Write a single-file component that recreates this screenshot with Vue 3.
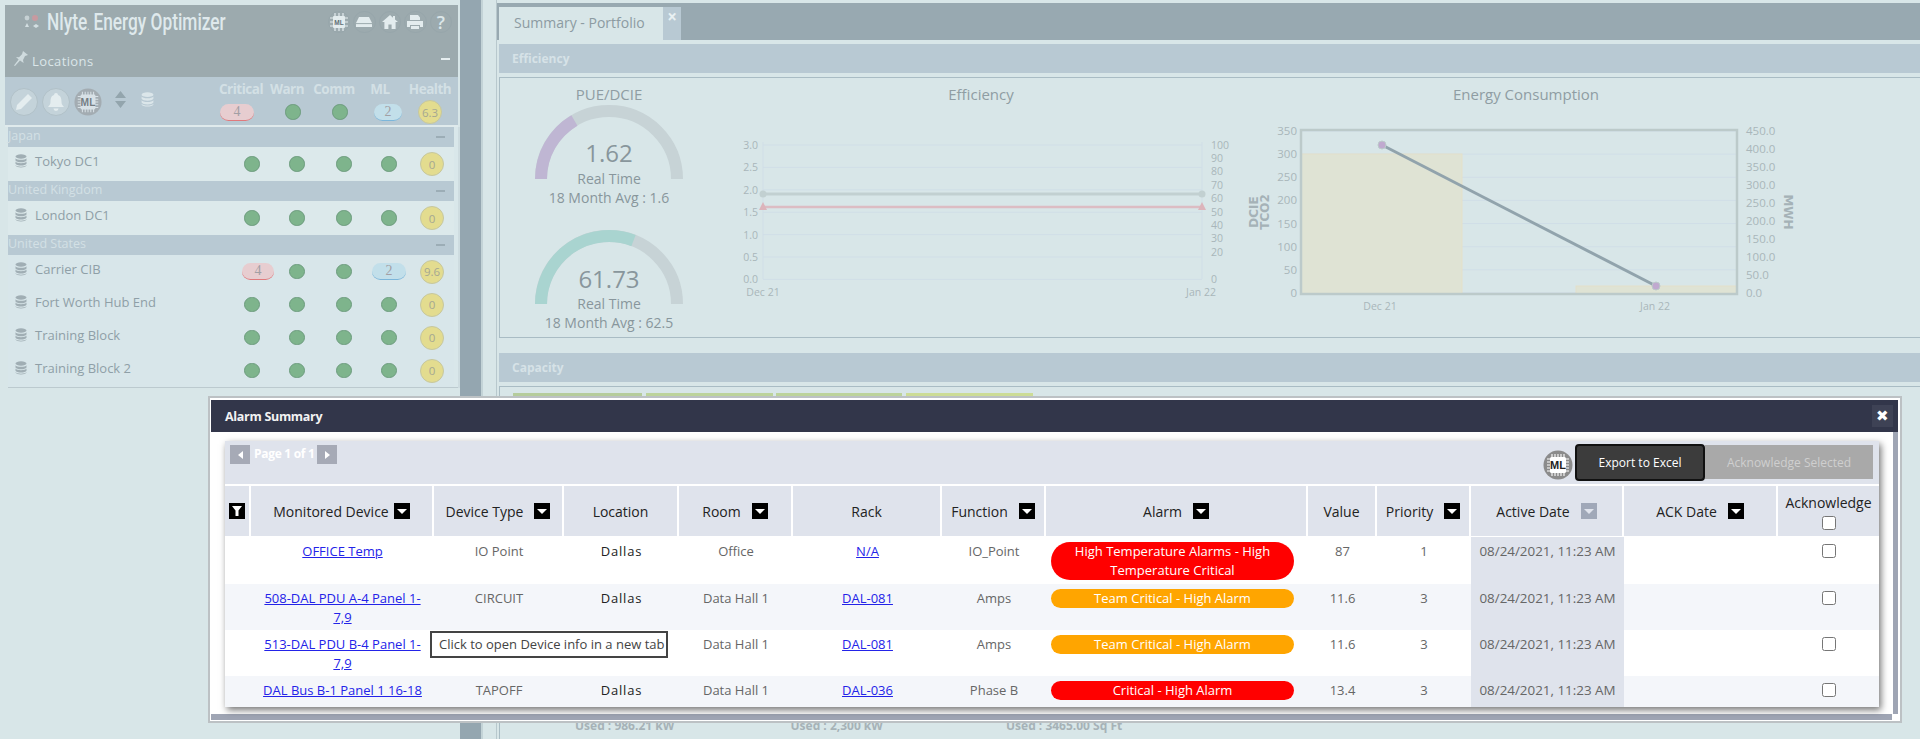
<template>
  <div class="page">
    <svg class="sprites" width="0" height="0">
      <symbol id="db" viewBox="0 0 12 14">
        <ellipse cx="6" cy="2.5" rx="5.5" ry="2.2" fill="currentColor" />
        <path d="M.5 4.2c1 2.2 10 2.2 11 0v2.2c-1 2.4-10 2.4-11 0zM.5 7.6c1 2.2 10 2.2 11 0v2.2c-1 2.4-10 2.4-11 0zM.5 11c1 2.2 10 2.2 11 0v.6c-1 2.6-10 2.6-11 0z" fill="currentColor" />
      </symbol>
      <symbol id="chip" viewBox="0 0 30 30">
        <circle cx="15" cy="15" r="14.5" fill="#8b8b8b" />
        <path d="M9 4v22M12 4v22M15 4v22M18 4v22M21 4v22M4 9h22M4 12h22M4 15h22M4 18h22M4 21h22" stroke="#fff" stroke-width="1.1" />
        <rect x="7" y="7" width="16" height="16" rx="1.5" fill="#fff" />
        <text x="15" y="19" text-anchor="middle" class="chip-text">ML</text>
      </symbol>
    </svg>

    <aside class="left">
      <section class="panel">
        <header class="panel-top">
          <div class="brand">
            <svg class="logo" width="20" height="14" viewBox="0 0 20 14">
              <circle cx="5" cy="3" r="2.4" fill="#c6d1d4" />
              <circle cx="13" cy="3" r="3" fill="#c79aa0" />
              <path d="M5 8l2 4H3zM14 9l3 2-3 2-3-2z" fill="#d3dfe2" />
            </svg>
            <span class="brand-name">Nlyte<small>.</small> Energy Optimizer</span>
            <div class="top-icons">
              <span class="round">
                <svg width="20" height="20" viewBox="0 0 20 20"><path d="M6 1v18M10 1v18M14 1v18M1 6h18M1 10h18M1 14h18" stroke="#e3ecee" stroke-width="1.2" /><rect x="4" y="4" width="12" height="12" rx="1" fill="#e3ecee" /><text x="10" y="12.6" text-anchor="middle" class="mini-ml">ML</text></svg>
              </span>
              <span class="round">
                <svg width="18" height="18" viewBox="0 0 18 18"><path d="M4 4h10l3 6v4H1v-4z" fill="#e3ecee" /><path d="M1 10.6h16" stroke="#9caaae" /></svg>
              </span>
              <span class="round">
                <svg width="18" height="18" viewBox="0 0 18 18"><path d="M9 2L1 9h2.4v7h4v-4.6h3.2V16h4V9H17l-3-2.6V3h-2v1.7z" fill="#e3ecee" /></svg>
              </span>
              <span class="round">
                <svg width="18" height="18" viewBox="0 0 18 18"><path d="M4 2h8l2 2.5V7H4zM1 8h16v6h-3v-2H4v2H1zM5 13h8v3H5z" fill="#e3ecee" /></svg>
              </span>
              <span class="round question">?</span>
            </div>
          </div>
          <div class="locations">
            <svg width="14" height="16" viewBox="0 0 14 16"><path d="M9 0l5 4-3 1-2 4 .6 3L6 9.600 1 15l-1-.6 4.600-6L2 6l3 .2 3-3z" fill="#cfdbde" /></svg>
            <span>Locations</span>
            <b class="minus"></b>
          </div>
        </header>

        <div class="sub-head">
          <div class="tools">
            <span class="tool">
              <svg width="20" height="20" viewBox="0 0 20 20"><path d="M14 2l4 4L7 17l-5 1 1-5z" fill="#e4edef" /></svg>
            </span>
            <span class="tool">
              <svg width="18" height="20" viewBox="0 0 18 20"><path d="M9 1a2 2 0 0 1 2 2c3 1 3.500 4 3.500 7 0 2 1 3.500 2.500 5H1c1.500-1.500 2.500-3 2.500-5 0-3 .5-6 3.500-7a2 2 0 0 1 2-2zM6.500 16.500h5a2.500 2.500 0 0 1-5 0z" fill="#e4edef" /></svg>
            </span>
            <svg class="tool-chip" width="28" height="28"><use href="#chip" /></svg>
            <svg class="sort" width="11" height="17" viewBox="0 0 11 17"><path d="M5.500 0L11 7H0zM5.500 17L0 10h11z" fill="#93a5ad" /></svg>
            <svg class="tool-db" width="13" height="15"><use href="#db" /></svg>
          </div>
          <div class="status-cols">
            <div v-for="c in statusCols" :key="c" class="status-label">{{ c }}</div>
            <div><span class="pill red head-critical">4</span></div>
            <div><i class="dot head-dot"></i></div>
            <div><i class="dot head-dot"></i></div>
            <div><span class="pill blue head-ml">2</span></div>
            <div><span class="health">6.3</span></div>
          </div>
        </div>

        <div class="tree">
          <template v-for="g in groups" :key="g.name">
            <div class="group-head">
              <span>{{ g.name }}</span>
              <b class="minus dark"></b>
            </div>
            <div v-for="row in g.rows" :key="row.name" class="loc-row" :class="{ tall: g.rows.length === 1 }">
              <div class="loc-name">
                <svg width="12" height="14"><use href="#db" /></svg>
                <span>{{ row.name }}</span>
              </div>
              <div class="cell">
                <span v-if="row.critical" class="pill red shifted">{{ row.critical }}</span>
                <i v-else class="dot"></i>
              </div>
              <div class="cell"><i class="dot"></i></div>
              <div class="cell"><i class="dot"></i></div>
              <div class="cell">
                <span v-if="row.ml" class="pill blue">{{ row.ml }}</span>
                <i v-else class="dot"></i>
              </div>
              <div class="cell"><span class="health">{{ row.health }}</span></div>
            </div>
          </template>
        </div>
      </section>
    </aside>

    <div class="divider"></div>

    <main class="main">
      <div class="tabs">
        <div class="tab">Summary - Portfolio</div>
        <div class="tab-close">×</div>
      </div>

      <h2 class="section-head">Efficiency</h2>
      <div class="efficiency">
        <svg class="chart" width="220" height="259" viewBox="500 78 220 259">
          <text x="609" y="100" text-anchor="middle" class="chart-title">PUE/DCIE</text>

          <path :d="arc(609, 179, 68, 0, 1)" class="gauge-track" />
          <path :d="arc(609, 179, 68, 0, 0.33)" class="gauge-purple" />
          <text x="609" y="162" text-anchor="middle" class="gauge-value">1.62</text>
          <text x="609" y="184" text-anchor="middle" class="gauge-sub">Real Time</text>
          <text x="609" y="203" text-anchor="middle" class="gauge-sub">18 Month Avg :  1.6</text>

          <path :d="arc(609, 304, 68, 0, 1)" class="gauge-track" />
          <path :d="arc(609, 304, 68, 0, 0.6173)" class="gauge-teal" />
          <text x="609" y="288" text-anchor="middle" class="gauge-value">61.73</text>
          <text x="609" y="309" text-anchor="middle" class="gauge-sub">Real Time</text>
          <text x="609" y="328" text-anchor="middle" class="gauge-sub">18 Month Avg :  62.5</text>
        </svg>

        <svg class="chart" width="550" height="259" viewBox="720 78 550 259">
          <text x="981" y="100" text-anchor="middle" class="chart-title">Efficiency</text>
          <line v-for="t in pueTicks" :key="t.label" x1="763" x2="1202" :y1="t.y" :y2="t.y" class="grid" />
          <line x1="763" x2="763" y1="142" y2="279" class="grid" />
          <line x1="1202" x2="1202" y1="142" y2="279" class="grid" />
          <text v-for="t in pueTicks" :key="'l' + t.label" x="758" :y="t.y + 4" text-anchor="end" class="tick">{{ t.label }}</text>
          <text v-for="t in dcieTicks" :key="t.label" x="1211" :y="t.y + 4" class="tick">{{ t.label }}</text>
          <text transform="translate(716 211) rotate(-90)" text-anchor="middle" class="axis-name">PUE</text>
          <text transform="translate(1258 212) rotate(-90)" text-anchor="middle" class="axis-name serifish">DCIE</text>
          <text transform="translate(1269 212) rotate(-90)" text-anchor="middle" class="axis-name serifish">TCO2</text>
          <line x1="763" x2="1202" y1="194" y2="194" stroke="#c2d0d1" stroke-width="3" />
          <line x1="763" x2="1202" y1="207" y2="207" stroke="#dcbcc3" stroke-width="2.500" />
          <circle cx="763" cy="194" r="3.500" fill="#c2d0d1" />
          <circle cx="1202" cy="194" r="3.500" fill="#c2d0d1" />
          <path d="M763 202l4 8h-8zM1202 202l4 8h-8z" fill="#dcb4bb" />
          <text x="763" y="296" text-anchor="middle" class="tick">Dec 21</text>
          <text x="1201" y="296" text-anchor="middle" class="tick">Jan 22</text>
        </svg>

        <svg class="chart" width="550" height="259" viewBox="1270 78 550 259">
          <text x="1526" y="100" text-anchor="middle" class="chart-title">Energy Consumption</text>
          <line v-for="t in tco2Ticks" :key="t.label" x1="1301" x2="1737" :y1="t.y" :y2="t.y" class="grid" />
          <rect x="1301" y="154" width="161" height="140" fill="#dfe3d4" stroke="#e4e0c9" />
          <rect x="1576" y="286" width="161" height="8" fill="#dfe3d4" stroke="#e4e0c9" />
          <rect x="1301" y="130" width="436" height="164" fill="none" stroke="#bccaca" stroke-width="2.500" />
          <line x1="1382" y1="145" x2="1656" y2="286" stroke="#91a3ac" stroke-width="3" />
          <circle cx="1382" cy="145" r="4" fill="#c0a9cf" stroke="#bccaca" />
          <circle cx="1656" cy="286" r="4" fill="#c0a9cf" stroke="#bccaca" />
          <text v-for="t in tco2Ticks" :key="'l' + t.label" x="1297" :y="t.y + 4" text-anchor="end" class="tick big">{{ t.label }}</text>
          <text v-for="t in mwhTicks" :key="t.label" x="1746" :y="t.y + 4" class="tick big">{{ t.label }}</text>
          <text transform="translate(1784 212) rotate(90)" text-anchor="middle" class="axis-name serifish">MWH</text>
          <text x="1380" y="310" text-anchor="middle" class="tick">Dec 21</text>
          <text x="1655" y="310" text-anchor="middle" class="tick">Jan 22</text>
        </svg>
      </div>

      <h2 class="section-head capacity-head">Capacity</h2>
      <div class="capacity">
        <div class="bars">
          <i v-for="b in capacityBars" :key="b.w + b.color" :style="{ width: b.w + 'px', background: b.color }"></i>
        </div>
        <div class="used">
          <span v-for="u in usedLabels" :key="u">{{ u }}</span>
        </div>
      </div>
    </main>

    <div class="modal">
      <div class="modal-title">
        <span>Alarm Summary</span>
        <button class="modal-close">✖</button>
      </div>
      <div class="modal-body">
        <div class="modal-content">
          <div class="table-wrap">
            <div class="toolbar">
              <button class="page-btn"><i class="tri left-tri"></i></button>
              <span class="page-label">Page 1 of 1</span>
              <button class="page-btn"><i class="tri right-tri"></i></button>
              <svg class="ml-icon" width="30" height="30"><use href="#chip" /></svg>
              <button class="btn-export">Export to Excel</button>
              <button class="btn-ack">Acknowledge Selected</button>
            </div>
            <table>
              <colgroup>
                <col v-for="w in colWidths" :key="w.id" :style="{ width: w.px + 'px' }" />
              </colgroup>
              <thead>
                <tr>
                  <th>
                    <span class="filter">
                      <svg width="12" height="12" viewBox="0 0 12 12"><path d="M1 1h10L7.500 5.500V11h-3V5.500z" fill="#fff" /></svg>
                    </span>
                  </th>
                  <th>Monitored Device<span class="filter arrow near"></span></th>
                  <th>Device Type<span class="filter arrow"></span></th>
                  <th>Location</th>
                  <th>Room<span class="filter arrow"></span></th>
                  <th>Rack</th>
                  <th>Function<span class="filter arrow"></span></th>
                  <th>Alarm<span class="filter arrow"></span></th>
                  <th>Value</th>
                  <th>Priority<span class="filter arrow"></span></th>
                  <th>Active Date<span class="filter arrow active"></span></th>
                  <th>ACK Date<span class="filter arrow"></span></th>
                  <th class="ack-head">Acknowledge<input type="checkbox" /></th>
                </tr>
              </thead>
              <tbody>
                <tr v-for="a in alarms" :key="a.device" :style="{ height: a.h + 'px' }">
                  <td></td>
                  <td><a href="#">{{ a.device }}</a></td>
                  <td>{{ a.type }}</td>
                  <td class="place">Dallas</td>
                  <td>{{ a.room }}</td>
                  <td><a href="#">{{ a.rack }}</a></td>
                  <td>{{ a.fn }}</td>
                  <td class="alarm-cell"><div class="alarm" :class="a.level">{{ a.alarm }}</div></td>
                  <td>{{ a.value }}</td>
                  <td>{{ a.priority }}</td>
                  <td class="date">08/24/2021, 11:23 AM</td>
                  <td></td>
                  <td><input type="checkbox" /></td>
                </tr>
              </tbody>
            </table>
            <div class="tooltip">Click to open Device info in a new tab</div>
          </div>
        </div>
        <div class="vbar"></div>
      </div>
      <div class="hbar"></div>
    </div>
  </div>
</template>

<script setup>
const statusCols = ['Critical', 'Warn', 'Comm', 'ML', 'Health']

const groups = [
  { name: 'Japan', rows: [{ name: 'Tokyo DC1', health: '0' }] },
  { name: 'United Kingdom', rows: [{ name: 'London DC1', health: '0' }] },
  {
    name: 'United States',
    rows: [
      { name: 'Carrier CIB', critical: 4, ml: 2, health: '9.6' },
      { name: 'Fort Worth Hub End', health: '0' },
      { name: 'Training Block', health: '0' },
      { name: 'Training Block 2', health: '0' }
    ]
  }
]

const pueTicks = ['3.0', '2.5', '2.0', '1.5', '1.0', '0.5', '0.0'].map((label, i) => ({
  label,
  y: 145 + i * 22.4
}))
const dcieTicks = [
  ['100', 145], ['90', 158], ['80', 171], ['70', 185], ['60', 198],
  ['50', 212], ['40', 225], ['30', 238], ['20', 252], ['0', 279]
].map(([label, y]) => ({ label, y }))
const tco2Ticks = ['350', '300', '250', '200', '150', '100', '50', '0'].map((label, i) => ({
  label,
  y: 131 + i * 23.14
}))
const mwhTicks = ['450.0', '400.0', '350.0', '300.0', '250.0', '200.0', '150.0', '100.0', '50.0', '0.0'].map((label, i) => ({
  label,
  y: 131 + i * 18
}))

const capacityBars = [
  { w: 129, color: '#b5cc9c' },
  { w: 127, color: '#bcd39b' },
  { w: 126, color: '#bcd39b' },
  { w: 127, color: '#ccdc96' }
]
const usedLabels = ['Used : 986.21 kW', 'Used : 2,300 kW', 'Used : 3465.00 Sq Ft']

const colWidths = [26, 183, 130, 115, 114, 149, 104, 262, 69, 94, 153, 154, 101].map((px, id) => ({ id, px }))

const alarms = [
  { device: 'OFFICE Temp', type: 'IO Point', room: 'Office', rack: 'N/A', fn: 'IO_Point', alarm: 'High Temperature Alarms - High Temperature Critical', level: 'red', value: '87', priority: 1, h: 47 },
  { device: '508-DAL PDU A-4 Panel 1-7,9', type: 'CIRCUIT', room: 'Data Hall 1', rack: 'DAL-081', fn: 'Amps', alarm: 'Team Critical - High Alarm', level: 'orange', value: '11.6', priority: 3, h: 46 },
  { device: '513-DAL PDU B-4 Panel 1-7,9', type: '', room: 'Data Hall 1', rack: 'DAL-081', fn: 'Amps', alarm: 'Team Critical - High Alarm', level: 'orange', value: '11.6', priority: 3, h: 46 },
  { device: 'DAL Bus B-1 Panel 1 16-18', type: 'TAPOFF', room: 'Data Hall 1', rack: 'DAL-036', fn: 'Phase B', alarm: 'Critical - High Alarm', level: 'red', value: '13.4', priority: 3, h: 31 }
]

// half-circle gauge, from the left end (0) over the top to the right end (1)
const arc = (cx, cy, r, from, to) => {
  const point = (t) => {
    const a = Math.PI * (1 - t)
    return `${(cx + r * Math.cos(a)).toFixed(2)} ${(cy - r * Math.sin(a)).toFixed(2)}`
  }
  return `M${point(from)} A${r} ${r} 0 0 1 ${point(to)}`
}
</script>

<style>
html,
body {
  margin: 0;
  background: #d8e6e8;
}
</style>

<style scoped>
.page {
  position: relative;
  display: flex;
  width: 1920px;
  height: 739px;
  overflow: hidden;
  background: #d8e6e8;
  font-family: "Open Sans", "Liberation Sans", sans-serif;
}

.sprites {
  position: absolute;
}

.chip-text {
  font: 700 11px "Liberation Sans", sans-serif;
  fill: #222;
}

/* left panel */
.left {
  width: 459px;
  flex: none;
  padding: 5px 0 0 5px;
  box-sizing: border-box;
}

.panel {
  width: 453px;
}

.panel-top {
  height: 72px;
  background: #9caaae;
  color: #dbe6e9;
}

.brand {
  display: flex;
  align-items: center;
  height: 34px;
  padding-left: 17px;
}

.logo {
  flex: none;
}

.brand-name {
  flex: none;
  width: 173px;
  margin-left: 5px;
  font: 500 24px "Roboto", "Liberation Sans", sans-serif;
  white-space: nowrap;
  transform: scaleX(0.72);
  transform-origin: left center;
  color: #dfe9ec;
}

.brand-name small {
  font-size: 10px;
}

.top-icons {
  display: flex;
  gap: 3px;
  margin-left: auto;
  margin-right: 6px;
}

.round {
  display: flex;
  align-items: center;
  justify-content: center;
  width: 22.500px;
  height: 22.500px;
  border: 1px solid #97a6ab;
  border-radius: 50%;
  box-sizing: border-box;
}

.question {
  font-size: 18px;
  font-weight: 600;
}

.mini-ml {
  font: 700 6.500px "Liberation Sans", sans-serif;
  fill: #5f6f75;
}

.locations {
  display: flex;
  align-items: center;
  height: 36px;
  margin-top: 2px;
  padding: 0 8px 0 9px;
  font-size: 13px;
  letter-spacing: 0.4px;
}

.locations span {
  margin-left: 4px;
  padding-top: 4px;
}

.minus {
  display: block;
  width: 9px;
  height: 2px;
  margin-left: auto;
  background: #e6eef0;
}

.minus.dark {
  background: #9cadb6;
}

.sub-head {
  display: flex;
  height: 48px;
  background: #b8c9d3;
  border-bottom: 2px solid #dfeaec;
}

.tools {
  display: flex;
  align-items: center;
  width: 213px;
  flex: none;
  padding: 2px 0 0 5px;
  box-sizing: border-box;
}

.tool {
  display: flex;
  align-items: center;
  justify-content: center;
  width: 28px;
  height: 28px;
  margin-right: 4px;
  background: #c4d3da;
  border: 1px solid #b1c1c8;
  border-radius: 50%;
  box-sizing: border-box;
}

.tool-chip {
  opacity: 0.45;
}

.sort {
  margin: -6px 0 0 13px;
}

.tool-db {
  margin: -6px 0 0 15px;
  color: #dbe6ea;
}

.status-cols {
  display: grid;
  grid-template-columns: 46px 46px 48px 44px 56px;
  grid-template-rows: 22px 26px;
  flex: 1;
  text-align: center;
}

.status-label {
  padding-top: 2px;
  font-size: 13.500px;
  font-weight: 700;
  letter-spacing: -0.5px;
  color: #d3e0e5;
}

.status-cols > div {
  display: flex;
  align-items: center;
  justify-content: center;
}

.head-critical {
  margin-left: -8px;
}

.head-dot {
  margin-left: 12px;
}

.head-ml {
  margin-left: 16px;
}

.pill {
  display: inline-block;
  width: 34px;
  height: 17px;
  border-radius: 9px;
  box-sizing: border-box;
  font: 14px/16px "Liberation Serif", serif;
  text-align: center;
  color: #a29fa5;
}

.pill.red {
  background: #e7cdd0;
  border-bottom: 1px solid #df7a7d;
}

.pill.blue {
  background: #c2dfea;
  border-bottom: 1px solid #7cb6da;
}

.pill.shifted {
  margin-left: 12px;
}

.dot {
  display: block;
  width: 15.500px;
  height: 15.500px;
  border: 1px solid #6d9c7e;
  border-radius: 50%;
  background: #7eb48c;
  box-sizing: border-box;
}

.health {
  display: flex;
  align-items: center;
  justify-content: center;
  width: 24px;
  height: 24px;
  background: #e3dc8f;
  border: 1px solid #c6c79f;
  border-radius: 50%;
  box-sizing: border-box;
  font-size: 11.500px;
  color: #a5a792;
}

.tree {
  width: 446px;
  margin-left: 3px;
  padding-right: 4px;
  border-bottom: 1px solid #bccacf;
  background: #d9e7ea;
  box-shadow: 4px 0 0 #cedce0;
}

.group-head {
  display: flex;
  align-items: center;
  height: 20px;
  padding-right: 9px;
  background: #b8c9d3;
  font-size: 12.500px;
  color: #d3e0e5;
}

.group-head span {
  margin-top: -3px;
}

.loc-row {
  display: grid;
  grid-template-columns: 222px 44px 46px 48px 42px 44px;
  align-items: center;
  height: 33px;
  background: #d8e6ea;
}

.loc-row.tall {
  height: 34px;
  background: #dce9eb;
}

.loc-name {
  display: flex;
  align-items: center;
  gap: 8px;
  padding: 0 0 6px 7px;
  font-size: 13px;
  color: #8f9fa7;
}

.loc-name svg {
  color: #a0aeb4;
}

.cell {
  display: flex;
  align-items: center;
  justify-content: center;
}

/* divider between panel and content */
.divider {
  width: 21px;
  margin-left: 1px;
  flex: none;
  background: #94a6b0;
  border-right: 2px solid #c3d3d7;
  box-sizing: content-box;
}

/* main content */
.main {
  flex: 1;
  min-width: 0;
  padding: 3px 0 0 2px;
  border-left: 1px solid #b8c8cd;
  margin-left: 13px;
}

.tabs {
  display: flex;
  align-items: flex-end;
  height: 37px;
  margin-left: -2px;
  padding-left: 2px;
  background: #98a9b1;
}

.tab {
  width: 164px;
  height: 33px;
  padding-left: 15px;
  box-sizing: border-box;
  background: #d8e6e8;
  font-size: 14px;
  line-height: 32px;
  color: #8c9ba2;
}

.tab-close {
  width: 18px;
  height: 33px;
  background: #b8c9d3;
  font-size: 17px;
  font-weight: 700;
  line-height: 20px;
  text-align: center;
  color: #e8f0f2;
}

.section-head {
  height: 29px;
  margin: 4px 0 0;
  padding-left: 13px;
  background: #b8c9d3;
  font-size: 12px;
  font-weight: 700;
  line-height: 29px;
  color: #d6e2e7;
}

.efficiency {
  display: flex;
  height: 261px;
  margin-top: 4px;
  border: 1px solid #a9bcc4;
  border-right: none;
  box-sizing: border-box;
}

.chart {
  flex: none;
}

.chart-title {
  font-size: 15px;
  fill: #8f9da3;
}

.gauge-track,
.gauge-purple,
.gauge-teal {
  fill: none;
  stroke-width: 12;
}

.gauge-track {
  stroke: #c7d3d6;
}

.gauge-purple {
  stroke: #bfb6d3;
}

.gauge-teal {
  stroke: #a9d4d0;
}

.gauge-value {
  font-size: 24px;
  fill: #88969c;
}

.gauge-sub {
  font-size: 14px;
  white-space: pre;
  fill: #88969c;
}

.grid {
  stroke: #d0dee7;
  stroke-width: 1;
}

.tick {
  font-size: 10.500px;
  fill: #a9b6ba;
}

.tick.big {
  font-size: 11.500px;
}

.axis-name {
  font: 700 12px "Liberation Sans", sans-serif;
  fill: #aebbc0;
}

.serifish {
  font: 700 12px "DejaVu Sans", sans-serif;
  fill: #a5b2b7;
}

.capacity-head {
  margin-top: 15px;
}

.capacity {
  height: 400px;
  margin-top: 4px;
  padding: 6px 0 0 13px;
  border: 1px solid #a9bcc4;
  border-right: none;
}

.bars {
  display: flex;
  gap: 3.500px;
}

.bars i {
  display: block;
  height: 3px;
}

.used {
  display: flex;
  margin: 321px 0 0 62px;
  font-size: 12px;
  font-weight: 700;
  color: #a6b2b7;
}

.used span {
  width: 215.500px;
  flex: none;
}

/* alarm dialog */
.modal {
  position: absolute;
  left: 208px;
  top: 396px;
  width: 1694px;
  height: 327px;
  padding: 2px 2px 1px 1px;
  box-sizing: border-box;
  background: #fff;
  border: 2px solid #bcc1c4;
}

.modal-title {
  display: flex;
  align-items: center;
  justify-content: space-between;
  height: 32px;
  padding: 0 5px 0 14px;
  background: #32364a;
  font-size: 12.500px;
  font-weight: 700;
  letter-spacing: -0.3px;
  color: #f2f2f2;
}

.modal-close {
  width: 21px;
  height: 22px;
  padding: 0;
  border: none;
  background: #3e4255;
  font-size: 15px;
  line-height: 22px;
  color: #fff;
}

.modal-body {
  display: flex;
  height: 282px;
}

.modal-content {
  flex: 1;
  padding: 9px 0 0 14px;
}

.vbar {
  width: 5px;
  background: #9fa5b4;
}

.hbar {
  width: 1681px;
  height: 6px;
  background: #9fa5b4;
}

.table-wrap {
  position: relative;
  width: 1654px;
  background: #fff;
  box-shadow: 2px 3px 7px rgba(0, 0, 0, 0.55);
}

.toolbar {
  display: flex;
  align-items: flex-start;
  height: 43px;
  padding: 4px 6px 0 5px;
  box-sizing: border-box;
  background: #dfe3ec;
  border-bottom: 0;
}

.page-btn {
  display: flex;
  align-items: center;
  justify-content: center;
  width: 20px;
  height: 19px;
  padding: 0;
  border: none;
  background: #a6aab6;
}

.tri {
  display: block;
  width: 0;
  height: 0;
  border-top: 4px solid transparent;
  border-bottom: 4px solid transparent;
}

.left-tri {
  border-right: 5px solid #fff;
}

.right-tri {
  border-left: 5px solid #fff;
}

.page-label {
  width: 67px;
  padding-left: 4px;
  box-sizing: border-box;
  font-size: 12px;
  font-weight: 700;
  letter-spacing: -0.3px;
  line-height: 17px;
  color: #fff;
}

.ml-icon {
  margin: 5px 2px 0 auto;
  flex: none;
}

.btn-export {
  width: 130px;
  height: 37px;
  margin-top: -1px;
  padding: 0;
  border: 2px solid #111;
  border-radius: 4px;
  background: #3c3c3c;
  font: 12px "Open Sans", sans-serif;
  color: #fff;
}

.btn-ack {
  width: 168px;
  height: 34px;
  padding: 0;
  border: none;
  background: #a9a9a9;
  font: 12px "Open Sans", sans-serif;
  color: #cfcfcf;
}

table {
  width: 1654px;
  margin-top: 2px;
  border-collapse: separate;
  border-spacing: 0;
  table-layout: fixed;
  font-size: 13px;
  color: #666;
}

th {
  height: 51px;
  padding: 0;
  box-sizing: border-box;
  background: #dfe3ec;
  border-right: 2px solid #fff;
  border-bottom: 1px solid #fff;
  font-size: 14px;
  font-weight: 500;
  color: #222;
  text-align: center;
  vertical-align: middle;
}

th:last-child {
  border-right: none;
}

.filter {
  display: inline-flex;
  align-items: center;
  justify-content: center;
  width: 16px;
  height: 16px;
  margin: -3px 0 0;
  background: #000;
  vertical-align: middle;
}

.filter.arrow {
  position: relative;
  margin-left: 11px;
}

.filter.arrow::after {
  content: "";
  display: block;
  width: 0;
  height: 0;
  border-left: 5px solid transparent;
  border-right: 5px solid transparent;
  border-top: 5px solid #fff;
}

.filter.near {
  margin-left: 5px;
}

.filter.active {
  background: #a0a8b8;
}

.filter.active::after {
  border-top-color: #dfe3ec;
}

.ack-head input[type="checkbox"] {
  display: block;
  margin: 4px auto 0;
}

td {
  padding: 5px 8px 0;
  vertical-align: top;
  text-align: center;
  line-height: 19px;
}

tbody tr:nth-child(even) td {
  background: #f4f6fa;
}

tbody tr td.date {
  padding-left: 0;
  padding-right: 0;
  background: #dfe3ec;
  font-size: 13.400px;
}

td a {
  color: #2323e8;
}

td.place {
  font-size: 13px;
  letter-spacing: 0.8px;
  color: #222;
}

td.alarm-cell {
  padding: 5px 14px 0 5px;
}

.alarm {
  border-radius: 19px;
  color: #fff;
}

.alarm.red {
  background: #f00;
}

.alarm.orange {
  background: #ffa500;
}

input[type="checkbox"] {
  width: 14px;
  height: 14px;
  margin: 2px 0 0;
  vertical-align: top;
}

.tooltip {
  position: absolute;
  left: 205px;
  top: 190px;
  width: 238px;
  height: 27px;
  box-sizing: border-box;
  padding-left: 7px;
  background: #fff;
  border: 2px solid #444;
  font-size: 13px;
  line-height: 23px;
  white-space: nowrap;
  color: #444;
}
</style>
